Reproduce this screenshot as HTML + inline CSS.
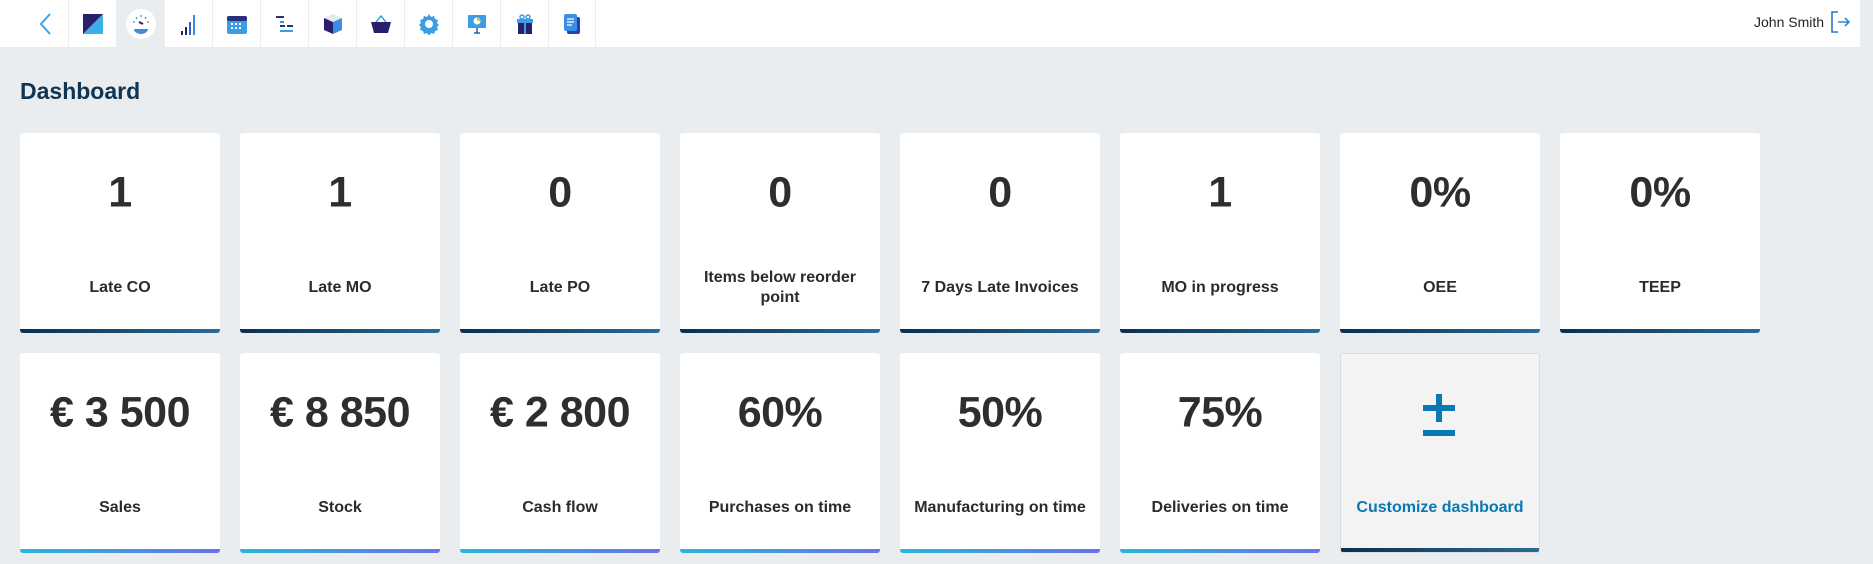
<!DOCTYPE html>
<html><head><meta charset="utf-8"><style>
*{box-sizing:border-box;margin:0;padding:0}
body{width:1873px;height:564px;background:#e9edf0;font-family:"Liberation Sans",sans-serif;position:relative;overflow:hidden}
.nav{position:absolute;left:0;top:0;width:1860px;height:47px;background:#fff}
.cell{position:absolute;top:0;width:48px;height:47px;border-left:1px solid #ececec;display:flex;align-items:center;justify-content:center}
.cell.act{background:#e9edf0}
h1{position:absolute;left:20px;top:78px;font-size:23px;font-weight:bold;color:#0e3553}
.card{position:absolute;width:200px;height:200px;background:#fff;border-radius:3px;overflow:hidden}
.card .n{position:absolute;left:0;right:0;top:60px;transform:translateY(-50%);text-align:center;font-size:43px;font-weight:bold;color:#2e2e2e;letter-spacing:-0.5px}
.card .l{position:absolute;left:10px;right:10px;top:155px;transform:translateY(-50%);text-align:center;font-size:16px;line-height:20px;font-weight:bold;color:#2b2b2b}
.card .b{position:absolute;left:0;right:0;bottom:0;height:4px}
.r1 .b{background:linear-gradient(90deg,#0b2f50,#2a6b97)}
.r2 .b{background:linear-gradient(90deg,#2ab6da,#6a72e8)}
</style></head><body>
<div class="nav">
<svg style="position:absolute;left:38px;top:12px" width="14" height="24" viewBox="0 0 14 24"><path d="M12 2 L3 12 L12 22" fill="none" stroke="#3aa6e6" stroke-width="2"/></svg>
<div class="cell" style="left:68px"><svg width="20" height="20"><path d="M20 0 L0 20 L20 20Z" fill="#3ab0e8"/><path d="M0 0 L20 0 L0 20Z" fill="#2a1f6b"/></svg></div>
<div class="cell act" style="left:116px"><svg width="30" height="30"><circle cx="15" cy="15" r="15" fill="#fff"/><path d="M8 20 h14 a7 5 0 0 1 -14 0z" fill="#3a8ee0"/><path d="M15 6v2M10 8l1 2M20 8l-1 2M7 13h2M21 13h2" stroke="#3a8ee0" stroke-width="1.2"/><path d="M13 13l4 2" stroke="#2a1f6b" stroke-width="2"/></svg></div>
<div class="cell" style="left:164px"><svg width="18" height="22"><rect x="1" y="18" width="2" height="4" fill="#2a1f6b"/><rect x="5" y="14" width="2" height="8" fill="#2a1f6b"/><rect x="9" y="9" width="2" height="13" fill="#3a5ad0"/><rect x="13" y="2" width="2" height="20" fill="#3a8ee0"/></svg></div>
<div class="cell" style="left:212px"><svg width="20" height="20"><rect y="2" width="20" height="18" rx="2" fill="#3a9ee6"/><rect y="2" width="20" height="5" rx="2" fill="#2a2f7b"/><g fill="#fff"><rect x="4" y="9" width="2" height="2"/><rect x="8" y="9" width="2" height="2"/><rect x="12" y="9" width="2" height="2"/><rect x="4" y="13" width="2" height="2"/><rect x="8" y="13" width="2" height="2"/><rect x="12" y="13" width="2" height="2"/></g></svg></div>
<div class="cell" style="left:260px"><svg width="20" height="20"><rect x="1" y="2" width="8" height="2" fill="#2a2f7b"/><rect x="5" y="7" width="4" height="2" fill="#3a8ee0"/><rect x="5" y="11" width="5" height="2" fill="#2a2f7b"/><rect x="12" y="11" width="6" height="2" fill="#2a2f7b"/><rect x="5" y="16" width="13" height="2" fill="#3a9ee6"/></svg></div>
<div class="cell" style="left:308px"><svg width="20" height="22"><path d="M10 1 L19 5 L10 9 L1 5Z" fill="#e6e9ef"/><path d="M1 5 L10 9 L10 21 L1 17Z" fill="#2a1f6b"/><path d="M19 5 L10 9 L10 21 L19 17Z" fill="#3a8ee0"/></svg></div>
<div class="cell" style="left:356px"><svg width="22" height="22"><path d="M6 9 L11 3 L16 9" fill="none" stroke="#3a9ee6" stroke-width="1.5"/><path d="M1 9 H21 L18 20 H4Z" fill="#2a1f6b"/></svg></div>
<div class="cell" style="left:404px"><svg width="22" height="22" viewBox="0 0 22 22"><path d="M11 1l2 3 3-1 1 3 3 1-1 3 2 2-2 2 1 3-3 1-1 3-3-1-2 3-2-3-3 1-1-3-3-1 1-3-2-2 2-2-1-3 3-1 1-3 3 1z" fill="#3a9ee6"/><circle cx="11" cy="11" r="4" fill="#fff"/></svg></div>
<div class="cell" style="left:452px"><svg width="20" height="22"><rect x="1" y="2" width="18" height="13" rx="1" fill="#3a9ee6"/><circle cx="10" cy="8" r="3.5" fill="#fff"/><path d="M10 8 V4.5 A3.5 3.5 0 0 1 13.5 8Z" fill="#c8d23a"/><path d="M10 15 V20 M7 20 H13" stroke="#2a5ab0" stroke-width="1.5"/></svg></div>
<div class="cell" style="left:500px"><svg width="20" height="22"><rect x="2" y="6" width="16" height="4" fill="#3a9ee6"/><rect x="3" y="10" width="14" height="11" fill="#2a1f6b"/><rect x="9" y="6" width="2" height="15" fill="#3a9ee6"/><circle cx="7" cy="4" r="2" fill="none" stroke="#3a9ee6" stroke-width="1.5"/><circle cx="13" cy="4" r="2" fill="none" stroke="#3a9ee6" stroke-width="1.5"/></svg></div>
<div class="cell" style="left:548px;border-right:1px solid #ececec"><svg width="20" height="22"><rect x="5" y="4" width="13" height="17" rx="2" fill="#2a3fb0"/><rect x="2" y="1" width="13" height="17" rx="2" fill="#3a8ee6"/><path d="M5 6h7M5 9h7M5 12h5" stroke="#fff" stroke-width="1.3"/></svg></div>
<div style="position:absolute;left:1754px;top:14px;font-size:14px;color:#222">John Smith</div>
<svg style="position:absolute;left:1830px;top:10px" width="22" height="24"><path d="M8 2 H2 V22 H8" fill="none" stroke="#2a7ac8" stroke-width="1.6"/><path d="M8 12 H19 M15 8 L19 12 L15 16" fill="none" stroke="#2a8ad8" stroke-width="1.6"/></svg>
</div>
<h1>Dashboard</h1>

<div class="card r1" style="left:20px;top:133px"><div class="n">1</div><div class="l">Late CO</div><div class="b"></div></div>
<div class="card r1" style="left:240px;top:133px"><div class="n">1</div><div class="l">Late MO</div><div class="b"></div></div>
<div class="card r1" style="left:460px;top:133px"><div class="n">0</div><div class="l">Late PO</div><div class="b"></div></div>
<div class="card r1" style="left:680px;top:133px"><div class="n">0</div><div class="l">Items below reorder point</div><div class="b"></div></div>
<div class="card r1" style="left:900px;top:133px"><div class="n">0</div><div class="l">7 Days Late Invoices</div><div class="b"></div></div>
<div class="card r1" style="left:1120px;top:133px"><div class="n">1</div><div class="l">MO in progress</div><div class="b"></div></div>
<div class="card r1" style="left:1340px;top:133px"><div class="n">0%</div><div class="l">OEE</div><div class="b"></div></div>
<div class="card r1" style="left:1560px;top:133px"><div class="n">0%</div><div class="l">TEEP</div><div class="b"></div></div>

<div class="card r2" style="left:20px;top:353px"><div class="n">€ 3 500</div><div class="l">Sales</div><div class="b"></div></div>
<div class="card r2" style="left:240px;top:353px"><div class="n">€ 8 850</div><div class="l">Stock</div><div class="b"></div></div>
<div class="card r2" style="left:460px;top:353px"><div class="n">€ 2 800</div><div class="l">Cash flow</div><div class="b"></div></div>
<div class="card r2" style="left:680px;top:353px"><div class="n">60%</div><div class="l">Purchases on time</div><div class="b"></div></div>
<div class="card r2" style="left:900px;top:353px"><div class="n">50%</div><div class="l">Manufacturing on time</div><div class="b"></div></div>
<div class="card r2" style="left:1120px;top:353px"><div class="n">75%</div><div class="l">Deliveries on time</div><div class="b"></div></div>
<div class="card r1" style="left:1340px;top:353px;background:#f3f3f4;border:1px solid #dcdcdc">
<svg style="position:absolute;left:81px;top:40px" width="34" height="44"><rect x="14" y="0" width="6" height="28" fill="#0a78b5"/><rect x="1" y="11" width="32" height="6" fill="#0a78b5"/><rect x="1" y="36" width="32" height="6" fill="#0a78b5"/></svg>
<div class="l" style="color:#0a78b5;top:154px">Customize dashboard</div><div class="b"></div></div>
</body></html>
